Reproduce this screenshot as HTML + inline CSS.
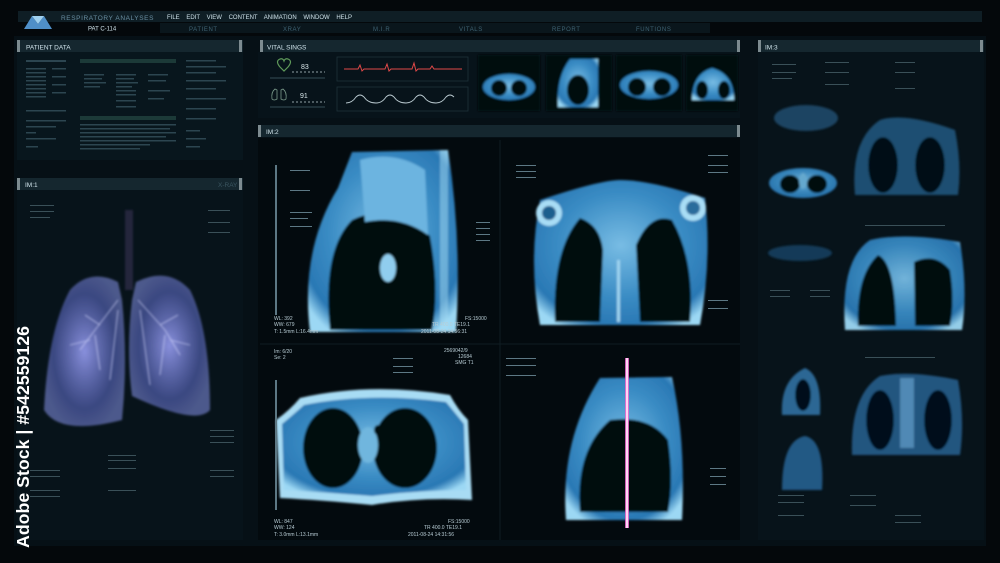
<!DOCTYPE html>
<html><head><meta charset="utf-8"><style>
html,body{margin:0;padding:0;background:#04080b;width:1000px;height:563px;overflow:hidden}
svg{display:block}
text{font-family:"Liberation Sans",sans-serif}
</style></head><body>
<svg width="1000" height="563" viewBox="0 0 1000 563" xmlns="http://www.w3.org/2000/svg">
<defs>
<radialGradient id="bl" cx="50%" cy="45%" r="65%"><stop offset="0" stop-color="#78bce4"/><stop offset="0.55" stop-color="#3a8cc4"/><stop offset="0.85" stop-color="#2a78b4"/><stop offset="1" stop-color="#9cd8f4"/></radialGradient>
<radialGradient id="lg" cx="50%" cy="50%" r="55%"><stop offset="0" stop-color="#a0a6ff" stop-opacity=".85"/><stop offset=".7" stop-color="#5664b8" stop-opacity=".65"/><stop offset="1" stop-color="#7c88d8" stop-opacity=".6"/></radialGradient>
<filter id="sf"><feGaussianBlur stdDeviation="1"/></filter>
</defs>
<rect width="1000" height="563" fill="#04080b"/>
<rect x="14" y="36" width="972" height="510" fill="#061016"/>
<rect x="17" y="52" width="226" height="108" fill="#08161d"/>
<rect x="17" y="190" width="226" height="350" fill="#07131a"/>
<rect x="258" y="52" width="482" height="66" fill="#07131a"/>
<rect x="258" y="138" width="482" height="402" fill="#030a0e"/>
<rect x="758" y="52" width="226" height="488" fill="#07131a"/>
<rect x="17" y="40" width="226" height="12" fill="#15272f"/><rect x="17" y="40" width="3" height="12" fill="#7d8b90"/><rect x="239" y="40" width="3" height="12" fill="#7d8b90"/>
<text x="26" y="49.5" font-size="6.5" fill="#cfe2ea">PATIENT DATA</text>
<rect x="260" y="40" width="480" height="12" fill="#15272f"/><rect x="260" y="40" width="3" height="12" fill="#7d8b90"/><rect x="737" y="40" width="3" height="12" fill="#7d8b90"/>
<text x="267" y="49.5" font-size="6.5" fill="#cfe2ea">VITAL SINGS</text>
<rect x="258" y="125" width="482" height="12" fill="#15272f"/><rect x="258" y="125" width="3" height="12" fill="#7d8b90"/><rect x="737" y="125" width="3" height="12" fill="#7d8b90"/>
<text x="266" y="134" font-size="6.5" fill="#cfe2ea">IM:2</text>
<rect x="17" y="178" width="226" height="12" fill="#15272f"/><rect x="17" y="178" width="3" height="12" fill="#7d8b90"/><rect x="239" y="178" width="3" height="12" fill="#7d8b90"/>
<text x="25" y="187" font-size="6.5" fill="#cfe2ea">IM:1</text><text x="218" y="187" font-size="6.5" fill="#3a5560">X-RAY</text>
<rect x="758" y="40" width="226" height="12" fill="#15272f"/><rect x="758" y="40" width="3" height="12" fill="#7d8b90"/><rect x="980" y="40" width="3" height="12" fill="#7d8b90"/>
<text x="765" y="49.5" font-size="6.5" fill="#cfe2ea">IM:3</text>
<rect x="18" y="11" width="964" height="11" fill="#0f1e25"/>
<rect x="160" y="23" width="550" height="10" fill="#0a161c"/>
<polygon points="24,29 32,16 38,24 44,16 52,29" fill="#4f8fc8"/><polygon points="32,16 38,24 44,16" fill="#9fd0ef"/>
<text x="61" y="20" font-size="6.5" fill="#6a8fa2" letter-spacing=".6">RESPIRATORY ANALYSES</text>
<text x="88" y="30.5" font-size="6" fill="#cfe2ea">PAT C-114</text>
<text x="167" y="19" font-size="6" fill="#cfe2ea" word-spacing="5">FILE EDIT VIEW CONTENT ANIMATION WINDOW HELP</text>
<text x="189" y="31" font-size="6" fill="#3e6272" letter-spacing=".6">PATIENT</text>
<text x="283" y="31" font-size="6" fill="#3e6272" letter-spacing=".6">XRAY</text>
<text x="373" y="31" font-size="6" fill="#3e6272" letter-spacing=".6">M.I.R</text>
<text x="459" y="31" font-size="6" fill="#3e6272" letter-spacing=".6">VITALS</text>
<text x="552" y="31" font-size="6" fill="#3e6272" letter-spacing=".6">REPORT</text>
<text x="636" y="31" font-size="6" fill="#3e6272" letter-spacing=".6">FUNTIONS</text>
<g fill="#2c4550">
<rect x="26" y="60" width="40" height="2"/><rect x="80" y="59" width="96" height="4" fill="#1c3a38"/><rect x="80" y="116" width="96" height="4" fill="#1c3a38"/>
<rect x="26" y="68" width="20" height="1.5"/><rect x="26" y="72" width="20" height="1.5"/><rect x="26" y="76" width="20" height="1.5"/><rect x="26" y="80" width="20" height="1.5"/><rect x="26" y="84" width="20" height="1.5"/><rect x="26" y="88" width="20" height="1.5"/><rect x="26" y="92" width="20" height="1.5"/><rect x="26" y="96" width="20" height="1.5"/>
<rect x="52" y="68" width="14" height="1.5"/><rect x="52" y="76" width="14" height="1.5"/><rect x="52" y="84" width="14" height="1.5"/><rect x="52" y="92" width="14" height="1.5"/>
<rect x="84" y="74" width="20" height="1.5"/><rect x="84" y="78" width="18" height="1.5"/><rect x="84" y="82" width="22" height="1.5"/><rect x="84" y="86" width="16" height="1.5"/>
<rect x="116" y="74" width="20" height="1.5"/><rect x="116" y="78" width="18" height="1.5"/><rect x="116" y="82" width="22" height="1.5"/><rect x="116" y="86" width="16" height="1.5"/><rect x="116" y="90" width="20" height="1.5"/><rect x="116" y="94" width="20" height="1.5"/><rect x="116" y="100" width="20" height="1.5"/><rect x="116" y="106" width="20" height="1.5"/>
<rect x="148" y="74" width="20" height="1.5"/><rect x="148" y="80" width="18" height="1.5"/><rect x="148" y="90" width="22" height="1.5"/><rect x="148" y="98" width="16" height="1.5"/>
<rect x="26" y="110" width="40" height="1.5"/><rect x="26" y="120" width="40" height="1.5"/><rect x="26" y="126" width="30" height="1.5"/><rect x="26" y="132" width="10" height="1.5"/><rect x="26" y="138" width="30" height="1.5"/><rect x="26" y="146" width="12" height="1.5"/>
<rect x="80" y="124" width="96" height="1.5"/><rect x="80" y="128" width="90" height="1.5"/><rect x="80" y="132" width="96" height="1.5"/><rect x="80" y="136" width="86" height="1.5"/><rect x="80" y="140" width="96" height="1.5"/><rect x="80" y="144" width="70" height="1.5"/><rect x="80" y="148" width="60" height="1.5"/>
<rect x="186" y="60" width="30" height="1.5"/><rect x="186" y="66" width="40" height="1.5"/><rect x="186" y="72" width="30" height="1.5"/><rect x="186" y="80" width="40" height="1.5"/><rect x="186" y="88" width="30" height="1.5"/><rect x="186" y="98" width="40" height="1.5"/><rect x="186" y="108" width="30" height="1.5"/><rect x="186" y="118" width="30" height="1.5"/><rect x="186" y="130" width="14" height="1.5"/><rect x="186" y="138" width="20" height="1.5"/><rect x="186" y="146" width="14" height="1.5"/>
</g>
<path d="M280 67 q-5-6 0-8 q3-1 4 2 q1-3 4-2 q5 2 0 8 l-4 4z" fill="none" stroke="#5f9a5a" stroke-width="1.2"/>
<rect x="270" y="77" width="55" height="2" fill="#1e3038"/>
<text x="301" y="69" font-size="7" fill="#d8e6ea">83</text><text x="300" y="98" font-size="7" fill="#d8e6ea">91</text>
<path d="M275 89 q-4 3-3 10 q2 2 5 0 v-9z M283 89 q4 3 3 10 q-2 2-5 0 v-9z" fill="none" stroke="#7a9a8a" stroke-width=".8"/>
<rect x="270" y="106" width="55" height="2" fill="#1e3038"/>
<line x1="292" y1="72" x2="325" y2="72" stroke="#c0d0d6" stroke-dasharray="2,2" stroke-width=".8"/>
<line x1="292" y1="102" x2="325" y2="102" stroke="#c0d0d6" stroke-dasharray="2,2" stroke-width=".8"/>
<rect x="337" y="57" width="131" height="24" fill="none" stroke="#1e323a" stroke-width=".8"/>
<rect x="337" y="87" width="131" height="24" fill="none" stroke="#1e323a" stroke-width=".8"/>
<path d="M344 69 H358 l2-4 2 6 2-2 H385 l2-5 2 7 2-2 H412 l2-6 2 8 2-2 H430 l2-3 2 3 H462" fill="none" stroke="#e04848" stroke-width="1"/>
<path d="M346 103 q6 0 10-6 q4-4 8 0 q4 6 12 6 q6 0 10-6 q4-4 8 0 q4 6 12 6 q6 0 10-6 q4-4 8 0 q4 6 12 6 q6 0 10-6 q4-4 8 0" fill="none" stroke="#b8c8ce" stroke-width=".9"/>
<g filter="url(#sf)">
<rect x="478" y="55" width="62" height="56" fill="#030a0e"/><rect x="546" y="55" width="66" height="56" fill="#030a0e"/><rect x="616" y="55" width="66" height="56" fill="#030a0e"/><rect x="686" y="55" width="52" height="56" fill="#030a0e"/>
<ellipse cx="509" cy="87" rx="26" ry="13" fill="url(#bl)"/><ellipse cx="499" cy="88" rx="8" ry="8" fill="#03080c"/><ellipse cx="519" cy="88" rx="8" ry="8" fill="#03080c"/>
<path d="M558 107 q-2-30 12-48 h28 v48z" fill="url(#bl)"/><ellipse cx="578" cy="90" rx="11" ry="15" fill="#03080c"/>
<ellipse cx="649" cy="85" rx="29" ry="14" fill="url(#bl)"/><ellipse cx="637" cy="87" rx="9" ry="9" fill="#03080c"/><ellipse cx="662" cy="87" rx="9" ry="9" fill="#03080c"/>
<path d="M692 100 q0-26 20-32 q22 6 22 32z" fill="url(#bl)"/><ellipse cx="702" cy="90" rx="6" ry="9" fill="#03080c"/><ellipse cx="724" cy="90" rx="6" ry="9" fill="#03080c"/>
</g>
<line x1="500" y1="140" x2="500" y2="540" stroke="#0f1c22"/><line x1="260" y1="344" x2="740" y2="344" stroke="#0f1c22"/>
<g filter="url(#sf)">
<path d="M352 152 L448 150 Q462 240 456 332 L310 332 Q300 250 338 188 Z" fill="url(#bl)"/>
<path d="M330 330 Q322 250 352 220 Q392 200 430 236 Q440 290 432 330 Z" fill="#020a0e"/>
<path d="M360 160 Q395 150 425 170 L428 235 Q400 215 365 222 Z" fill="#6cb4e0"/>
<rect x="440" y="150" width="8" height="180" fill="#a6dcf4" opacity=".5"/>
<ellipse cx="388" cy="268" rx="8" ry="14" fill="#90cdee"/>
</g>
<g filter="url(#sf)">
<path d="M540 200 Q600 180 620 180 Q650 180 705 198 Q712 260 700 325 L540 325 Q528 260 540 200Z" fill="url(#bl)"/>
<circle cx="549" cy="213" r="13" fill="#a8ddf5"/><circle cx="549" cy="213" r="7" fill="#1e5e8e"/>
<circle cx="693" cy="208" r="13" fill="#a8ddf5"/><circle cx="693" cy="208" r="7" fill="#2a6c9c"/>
<path d="M555 322 Q552 250 580 218 Q600 225 603 250 L600 322Z" fill="#020a0e"/>
<path d="M640 322 L636 245 Q650 212 672 220 Q695 260 690 322Z" fill="#020a0e"/>
<rect x="617" y="260" width="3" height="62" fill="#9fd4f0"/>
</g>
<g filter="url(#sf)">
<path d="M300 398 Q370 382 450 395 Q458 410 468 420 L472 500 Q420 497 372 505 Q320 500 280 498 L276 420 Q290 410 300 398Z" fill="#a8dcf4"/>
<path d="M304 405 Q370 392 446 402 Q456 414 464 424 L466 490 Q420 490 372 496 Q320 492 284 490 L282 424 Q294 414 304 405Z" fill="url(#bl)"/>
<ellipse cx="333" cy="448" rx="30" ry="40" fill="#020a0e"/>
<ellipse cx="405" cy="448" rx="32" ry="40" fill="#020a0e"/>
<ellipse cx="368" cy="445" rx="10" ry="18" fill="#6fb6de"/>
<ellipse cx="378" cy="430" rx="4" ry="5" fill="#020a0e"/>
</g>
<g filter="url(#sf)">
<path d="M600 378 L672 377 Q686 440 682 520 L566 520 Q560 440 600 378Z" fill="url(#bl)"/>
<path d="M580 512 Q575 450 610 420 Q650 415 668 440 Q674 480 668 512Z" fill="#020a0e"/>
</g>
<rect x="625" y="358" width="4" height="170" fill="#f06ad0" opacity=".85"/><rect x="626" y="358" width="2" height="170" fill="#ffd6f4"/>
<g font-family="Liberation Mono,monospace" font-size="5" fill="#b8ccd4">
<text x="274" y="320">WL: 392</text><text x="274" y="326">WW: 679</text><text x="274" y="333">T: 1.5mm L:16.4mm</text>
<text x="465" y="320">FS:15000</text><text x="432" y="326">TR 400.0 TE19.1</text><text x="421" y="333">2011-08-24 14:56:31</text>
<text x="274" y="353">Im: 6/20</text><text x="274" y="359">Se: 2</text>
<text x="444" y="352">2569042/9</text><text x="458" y="358">12684</text><text x="455" y="364">SMG T1</text>
<text x="274" y="523">WL: 847</text><text x="274" y="529">WW: 124</text><text x="274" y="536">T: 3.0mm L:13.1mm</text>
<text x="448" y="523">FS:15000</text><text x="424" y="529">TR 400.0 TE19.1</text><text x="408" y="536">2011-08-24 14:31:56</text>
</g>
<g fill="#5d7884">
<rect x="275" y="165" width="2" height="150"/><rect x="275" y="380" width="2" height="130"/>
<rect x="290" y="170" width="20" height="1"/><rect x="290" y="190" width="20" height="1"/><rect x="290" y="212" width="22" height="1"/><rect x="290" y="218" width="18" height="1"/><rect x="290" y="226" width="22" height="1"/>
<rect x="476" y="222" width="14" height="1"/><rect x="476" y="228" width="14" height="1"/><rect x="476" y="234" width="14" height="1"/><rect x="476" y="240" width="14" height="1"/>
<rect x="516" y="165" width="20" height="1"/><rect x="516" y="171" width="20" height="1"/><rect x="516" y="177" width="20" height="1"/>
<rect x="708" y="155" width="20" height="1"/><rect x="708" y="165" width="20" height="1"/><rect x="708" y="172" width="20" height="1"/><rect x="708" y="300" width="20" height="1"/><rect x="708" y="308" width="20" height="1"/>
<rect x="506" y="358" width="30" height="1"/><rect x="506" y="365" width="30" height="1"/><rect x="506" y="375" width="30" height="1"/>
<rect x="393" y="358" width="20" height="1"/><rect x="393" y="366" width="20" height="1"/><rect x="393" y="372" width="20" height="1"/>
<rect x="710" y="468" width="16" height="1"/><rect x="710" y="476" width="16" height="1"/><rect x="710" y="484" width="16" height="1"/>
</g>
<g filter="url(#sf)">
<rect x="125" y="210" width="8" height="80" fill="#5a4a7a" opacity=".35"/>
<path d="M118 282 Q90 268 70 290 Q48 330 44 410 Q60 436 122 420 Q128 360 122 300Z" fill="url(#lg)"/>
<path d="M136 282 Q168 266 190 290 Q210 330 210 410 Q196 426 132 396 Q126 350 132 300Z" fill="url(#lg)"/>
</g>
<g stroke="#d8dbff" stroke-width=".9" fill="none" opacity=".75" filter="url(#sf)">
<path d="M118 300 L95 330 L80 350 M100 325 L85 315 M95 335 L100 370 M118 310 L110 380 M90 340 L70 345"/>
<path d="M138 300 L165 330 L180 355 M160 325 L178 315 M165 335 L160 375 M140 310 L150 385 M170 340 L190 345"/>
</g>
<g fill="#3a5058">
<rect x="30" y="205" width="24" height="1"/><rect x="30" y="211" width="24" height="1"/><rect x="30" y="217" width="20" height="1"/><rect x="208" y="210" width="22" height="1"/><rect x="208" y="222" width="22" height="1"/><rect x="208" y="232" width="22" height="1"/>
<rect x="210" y="430" width="24" height="1"/><rect x="210" y="436" width="24" height="1"/><rect x="210" y="442" width="24" height="1"/><rect x="210" y="470" width="24" height="1"/><rect x="210" y="476" width="24" height="1"/>
<rect x="108" y="455" width="28" height="1"/><rect x="108" y="460" width="28" height="1"/><rect x="108" y="468" width="28" height="1"/><rect x="108" y="490" width="28" height="1"/>
<rect x="30" y="470" width="30" height="1"/><rect x="30" y="476" width="30" height="1"/><rect x="30" y="490" width="30" height="1"/><rect x="30" y="496" width="30" height="1"/>
</g>
<g filter="url(#sf)" opacity=".95">
<ellipse cx="806" cy="118" rx="32" ry="13" fill="#2c6a9a" opacity=".6"/>
<ellipse cx="803" cy="183" rx="34" ry="15" fill="url(#bl)"/><ellipse cx="790" cy="184" rx="10" ry="9" fill="#03080c"/><ellipse cx="817" cy="184" rx="10" ry="9" fill="#03080c"/><ellipse cx="803" cy="181" rx="4" ry="8" fill="#6ab0d8"/>
<path d="M855 195 Q850 140 880 120 Q905 112 955 130 Q962 165 958 195Z" fill="#2b6c9e" opacity=".7"/>
<ellipse cx="883" cy="165" rx="15" ry="28" fill="#050e14"/><ellipse cx="930" cy="165" rx="15" ry="28" fill="#050e14"/>
<ellipse cx="800" cy="253" rx="32" ry="8" fill="#1e4e78" opacity=".7"/>
<path d="M845 330 Q840 260 870 240 Q905 232 960 242 Q968 290 962 330Z" fill="url(#bl)"/>
<path d="M858 326 Q856 275 878 255 Q895 262 896 326Z" fill="#030a0e"/><path d="M915 326 L914 262 Q935 252 950 270 Q955 300 950 326Z" fill="#030a0e"/>
<path d="M782 415 Q780 380 805 368 Q822 375 820 415Z" fill="#3a82bc" opacity=".8"/><ellipse cx="803" cy="395" rx="8" ry="16" fill="#04101a"/>
<path d="M782 490 Q782 440 805 436 Q825 440 822 490Z" fill="#2f76b0" opacity=".75"/>
<path d="M852 455 Q850 395 880 376 Q910 370 958 380 Q965 420 960 455Z" fill="#2a6aa0" opacity=".8"/>
<ellipse cx="880" cy="420" rx="14" ry="30" fill="#04101a"/><ellipse cx="938" cy="420" rx="14" ry="30" fill="#04101a"/><rect x="900" y="378" width="14" height="70" fill="#6aa8d6" opacity=".7"/>
</g>
<g fill="#3a5058">
<rect x="772" y="64" width="24" height="1"/><rect x="772" y="72" width="24" height="1"/><rect x="772" y="78" width="20" height="1"/><rect x="825" y="62" width="24" height="1"/><rect x="825" y="72" width="24" height="1"/><rect x="825" y="84" width="24" height="1"/><rect x="895" y="62" width="20" height="1"/><rect x="895" y="72" width="20" height="1"/><rect x="895" y="88" width="20" height="1"/>
<rect x="770" y="290" width="20" height="1"/><rect x="770" y="296" width="20" height="1"/><rect x="810" y="290" width="20" height="1"/><rect x="810" y="296" width="20" height="1"/>
<rect x="778" y="495" width="26" height="1"/><rect x="778" y="502" width="26" height="1"/><rect x="778" y="515" width="26" height="1"/><rect x="850" y="495" width="26" height="1"/><rect x="850" y="505" width="26" height="1"/><rect x="895" y="515" width="26" height="1"/><rect x="895" y="522" width="26" height="1"/>
<rect x="865" y="225" width="80" height="1"/><rect x="865" y="357" width="70" height="1"/>
</g>
<text transform="translate(29,548) rotate(-90)" font-size="17.5" font-weight="bold" fill="#ffffff" textLength="222" lengthAdjust="spacingAndGlyphs">Adobe Stock | #542559126</text>
</svg>
</body></html>
